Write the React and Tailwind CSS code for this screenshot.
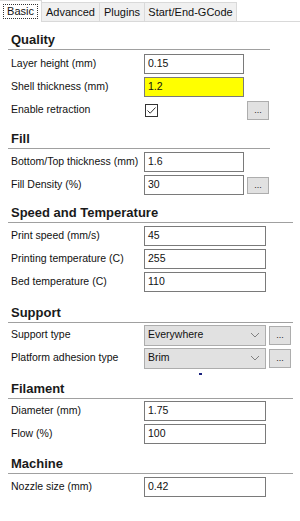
import React from 'react'

const font = "font-['Liberation_Sans',Arial,sans-serif]"

function Tabs() {
  return (
    <div className="flex items-end h-[22px] border-b border-[#d9d9d9] text-[11px] text-[#111]">
      <div className="w-[42px] h-[22px] -mb-px bg-white border-t border-r border-[#d9d9d9] flex items-center justify-center">
        <span className="px-[3px] leading-[13px] outline-1 outline-dotted outline-[#333]">Basic</span>
      </div>
      <div className="w-[58px] h-[19px] bg-[#f0f0f0] border-t border-r border-[#d9d9d9] flex items-center justify-center">Advanced</div>
      <div className="w-[45px] h-[19px] bg-[#f0f0f0] border-t border-r border-[#d9d9d9] flex items-center justify-center">Plugins</div>
      <div className="w-[92px] h-[19px] bg-[#f0f0f0] border-t border-r border-[#d9d9d9] flex items-center justify-center">Start/End-GCode</div>
    </div>
  )
}

function Heading({ title, height, wide }) {
  return (
    <div>
      <div className={`${height} flex items-end pb-[1px] pl-[11px]`}>
        <span className="text-[13px] leading-[16px] font-bold text-[#1a1a1a]">{title}</span>
      </div>
      <div className={`ml-[8px] h-px bg-[#a0a0a0] ${wide ? 'w-[285px]' : 'w-[262px]'}`} />
    </div>
  )
}

function Field({ value, wide, yellow }) {
  return (
    <div
      className={`${wide ? 'w-[122px]' : 'w-[100px]'} shrink-0 h-[20px] border border-[#7a7a7a] ${yellow ? 'bg-[#ffff00]' : 'bg-white'} px-[3px] flex items-center text-[#111]`}
    >
      {value}
    </div>
  )
}

function Dots({ small }) {
  return (
    <div className={`ml-[3px] shrink-0 w-[22px] ${small ? 'h-[17px]' : 'h-[19px]'} border border-[#adadad] bg-[#e1e1e1] flex items-center justify-center text-[9px] leading-none text-[#222]`}>
      ...
    </div>
  )
}

function Select({ value }) {
  return (
    <div className="w-[122px] shrink-0 h-[21px] border border-[#adadad] bg-[#e1e1e1] flex items-center justify-between pl-[3px] pr-[3px] text-[#111]">
      <span>{value}</span>
      <svg width="10" height="6" viewBox="0 0 10 6" className="mr-[2px]">
        <path d="M1 1 L5 5 L9 1" fill="none" stroke="#808080" strokeWidth="1" />
      </svg>
    </div>
  )
}

function Row({ label, children }) {
  return (
    <div className="flex items-center h-[20px]">
      <div className="w-[144px] shrink-0 pl-[11px] text-[#111] whitespace-nowrap">{label}</div>
      {children}
    </div>
  )
}

export default function App() {
  return (
    <div className={`w-[300px] h-[521px] bg-white overflow-hidden ${font} text-[10.5px]`}>
      <Tabs />

      {/* Quality */}
      <Heading title="Quality" height="h-[27px]" />
      <div className="pt-[4px] flex flex-col gap-[3px]">
        <Row label="Layer height (mm)">
          <Field value="0.15" />
        </Row>
        <Row label="Shell thickness (mm)">
          <Field value="1.2" yellow />
        </Row>
        <Row label="Enable retraction">
          <div className="w-[100px] shrink-0 flex items-center">
            <div className="ml-[1px] w-[13px] h-[13px] border border-[#333] bg-white flex items-center justify-center">
              <svg width="11" height="11" viewBox="0 0 11 11">
                <path d="M1.5 5.5 L4.2 8.2 L9.5 2.5" fill="none" stroke="#333" strokeWidth="1" />
              </svg>
            </div>
          </div>
          <Dots />
        </Row>
      </div>

      {/* Fill */}
      <Heading title="Fill" height="h-[28px]" />
      <div className="pt-[3px] flex flex-col gap-[3px]">
        <Row label="Bottom/Top thickness (mm)">
          <Field value="1.6" />
        </Row>
        <Row label="Fill Density (%)">
          <Field value="30" />
          <Dots small />
        </Row>
      </div>

      {/* Speed and Temperature */}
      <Heading title="Speed and Temperature" height="h-[27px]" wide />
      <div className="pt-[3px] flex flex-col gap-[3px]">
        <Row label="Print speed (mm/s)">
          <Field value="45" wide />
        </Row>
        <Row label="Printing temperature (C)">
          <Field value="255" wide />
        </Row>
        <Row label="Bed temperature (C)">
          <Field value="110" wide />
        </Row>
      </div>

      {/* Support */}
      <Heading title="Support" height="h-[30px]" wide />
      <div className="pt-[2px] flex flex-col gap-[3px] relative">
        <Row label="Support type">
          <Select value="Everywhere" />
          <Dots />
        </Row>
        <Row label="Platform adhesion type">
          <Select value="Brim" />
          <Dots />
        </Row>
        <span className="absolute left-[199px] top-[50px] w-[3px] h-[2px] bg-[#1a237e]" />
      </div>

      {/* Filament */}
      <Heading title="Filament" height="h-[30px]" wide />
      <div className="pt-[2px] flex flex-col gap-[3px]">
        <Row label="Diameter (mm)">
          <Field value="1.75" wide />
        </Row>
        <Row label="Flow (%)">
          <Field value="100" wide />
        </Row>
      </div>

      {/* Machine */}
      <Heading title="Machine" height="h-[29px]" wide />
      <div className="pt-[3px] flex flex-col gap-[3px]">
        <Row label="Nozzle size (mm)">
          <Field value="0.42" wide />
        </Row>
      </div>
    </div>
  )
}
